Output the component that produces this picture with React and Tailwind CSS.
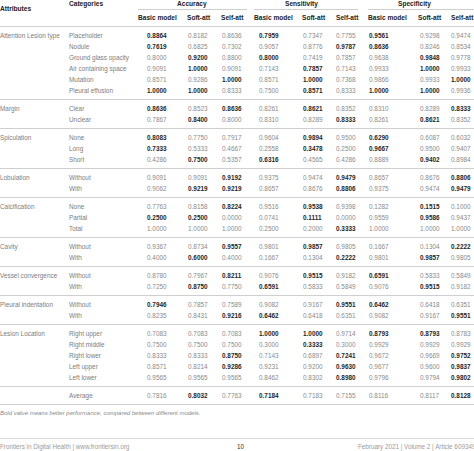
import React from 'react';

// "*" at the end of a value = bold (better performance)
const groups = [
  {
    name: 'Attention Lesion type',
    rows: [
      ['Placeholder', '0.8864*', '0.8182', '0.8636', '0.7959*', '0.7347', '0.7755', '0.9561*', '0.9298', '0.9474'],
      ['Nodule', '0.7619*', '0.6825', '0.7302', '0.9057', '0.8776', '0.9787*', '0.8636*', '0.8246', '0.8534'],
      ['Ground glass opacity', '0.8000', '0.9200*', '0.8800', '0.8000*', '0.7419', '0.7857', '0.9638', '0.9848*', '0.9778'],
      ['Air containing space', '0.9091', '1.0000*', '0.9091', '0.7143', '0.7857*', '0.7143', '0.9933', '1.0000*', '0.9933'],
      ['Mutation', '0.8571', '0.9286', '1.0000*', '0.8571', '1.0000*', '0.7368', '0.9866', '0.9933', '1.0000*'],
      ['Pleural effusion', '1.0000*', '1.0000*', '0.8333', '0.7500', '0.8571*', '0.8333', '1.0000*', '1.0000*', '0.9936'],
    ],
  },
  {
    name: 'Margin',
    rows: [
      ['Clear', '0.8636*', '0.8523', '0.8636*', '0.8261', '0.8621*', '0.8352', '0.8310', '0.8289', '0.8333*'],
      ['Unclear', '0.7867', '0.8400*', '0.8000', '0.8310', '0.8289', '0.8333*', '0.8261', '0.8621*', '0.8352'],
    ],
  },
  {
    name: 'Spiculation',
    rows: [
      ['None', '0.8083*', '0.7750', '0.7917', '0.9604', '0.9894*', '0.9500', '0.6290*', '0.6087', '0.6032'],
      ['Long', '0.7333*', '0.5333', '0.4667', '0.2558', '0.3478*', '0.2500', '0.9667*', '0.9500', '0.9407'],
      ['Short', '0.4286', '0.7500*', '0.5357', '0.6316*', '0.4565', '0.4286', '0.8889', '0.9402*', '0.8984'],
    ],
  },
  {
    name: 'Lobulation',
    rows: [
      ['Without', '0.9091', '0.9091', '0.9192*', '0.9375', '0.9474', '0.9479*', '0.8657', '0.8676', '0.8806*'],
      ['With', '0.9062', '0.9219*', '0.9219*', '0.8657', '0.8676', '0.8806*', '0.9375', '0.9474', '0.9479*'],
    ],
  },
  {
    name: 'Calcification',
    rows: [
      ['None', '0.7763', '0.8158', '0.8224*', '0.9516', '0.9538*', '0.9398', '0.1282', '0.1515*', '0.1000'],
      ['Partial', '0.2500*', '0.2500*', '0.0000', '0.0741', '0.1111*', '0.0000', '0.9559', '0.9586*', '0.9437'],
      ['Total', '1.0000', '1.0000', '1.0000', '0.2500', '0.2000', '0.3333*', '1.0000', '1.0000', '1.0000'],
    ],
  },
  {
    name: 'Cavity',
    rows: [
      ['Without', '0.9367', '0.8734', '0.9557*', '0.9801', '0.9857*', '0.9805', '0.1667', '0.1304', '0.2222*'],
      ['With', '0.4000', '0.6000*', '0.4000', '0.1667', '0.1304', '0.2222*', '0.9801', '0.9857*', '0.9805'],
    ],
  },
  {
    name: 'Vessel convergence',
    rows: [
      ['Without', '0.8780', '0.7967', '0.8211*', '0.9076', '0.9515*', '0.9182', '0.6591*', '0.5833', '0.5849'],
      ['With', '0.7250', '0.8750*', '0.7750', '0.6591*', '0.5833', '0.5849', '0.9076', '0.9515*', '0.9182'],
    ],
  },
  {
    name: 'Pleural indentation',
    rows: [
      ['Without', '0.7946*', '0.7857', '0.7589', '0.9082', '0.9167', '0.9551*', '0.6462*', '0.6418', '0.6351'],
      ['With', '0.8235', '0.8431', '0.9216*', '0.6462*', '0.6418', '0.6351', '0.9082', '0.9167', '0.9551*'],
    ],
  },
  {
    name: 'Lesion Location',
    rows: [
      ['Right upper', '0.7083', '0.7083', '0.7083', '1.0000*', '1.0000*', '0.9714', '0.8793*', '0.8793*', '0.8783'],
      ['Right middle', '0.7500', '0.7500', '0.7500', '0.3000', '0.3333*', '0.3000', '0.9929', '0.9929', '0.9929'],
      ['Right lower', '0.8333', '0.8333', '0.8750*', '0.7143', '0.6897', '0.7241*', '0.9672', '0.9669', '0.9752*'],
      ['Left upper', '0.8571', '0.8214', '0.9286*', '0.9231', '0.9200', '0.9630*', '0.9677', '0.9600', '0.9837*'],
      ['Left lower', '0.9565', '0.9565', '0.9565', '0.8462', '0.8302', '0.8980*', '0.9796', '0.9794', '0.9802*'],
    ],
  },
  {
    name: '',
    rows: [
      ['Average', '0.7816', '0.8032*', '0.7763', '0.7184*', '0.7183', '0.7155', '0.8116', '0.8117', '0.8128*'],
    ],
  },
];

const cols = 'grid grid-cols-[69px_69px_49px_34px_33px_48px_34px_32px_50px_33px_60px]';
const valPad = ['pl-[9px]', 'pl-[1px]', 'pl-[1px]', 'pl-[5px]', 'pl-[1px]', 'pl-0', 'pl-[1px]', 'pl-[2px]', 'pl-0'];
const subHeads = ['Basic model', 'Soft-att', 'Self-att', 'Basic model', 'Soft-att', 'Self-att', 'Basic model', 'Soft-att', 'Self-att'];

const Value = ({ v, i }) => {
  const bold = v.endsWith('*');
  return (
    <div className={`h-[11px] leading-[11px] whitespace-nowrap ${valPad[i]} ${bold ? 'font-bold text-[#1f1f1f]' : 'text-[#8a8a8a]'}`}>
      {bold ? v.slice(0, -1) : v}
    </div>
  );
};

export default function App() {
  return (
    <div className="w-[474px] h-[451px] overflow-hidden bg-white font-['Liberation_Sans',Arial,sans-serif]">
      <div className="w-[511px]">
        {/* header */}
        <div className={`${cols} grid-rows-[10px_16px] border-b border-[#cfcfcf] text-[6.6px] font-bold text-[#222]`}>
          <div className="row-span-2 pt-[5px] leading-[7px] whitespace-nowrap">Attributes</div>
          <div className="row-span-2 leading-[7px]">Categories</div>
          <div className="col-span-3 mr-[7px] border-b border-[#cfcfcf] pl-[39px] leading-[7px]">Accuracy</div>
          <div className="col-span-3 mr-[10px] border-b border-[#cfcfcf] pl-[31px] leading-[7px]">Sensitivity</div>
          <div className="col-span-3 border-b border-[#cfcfcf] pl-[30px] leading-[7px]">Specificity</div>
          {subHeads.map((h, i) => (
            <div key={i} className="flex items-center whitespace-nowrap">{h}</div>
          ))}
        </div>

        {/* body */}
        {groups.map((g) => (
          <div key={g.rows[0][0] + g.name} className={`${cols} py-[3px] border-b border-[#cfcfcf] text-[6.4px]`}>
            {g.rows.map((r, ri) => (
              <React.Fragment key={r[0]}>
                <div className="h-[11px] leading-[11px] whitespace-nowrap text-[#7d7d7d]">{ri === 0 ? g.name : ''}</div>
                <div className="h-[11px] leading-[11px] whitespace-nowrap text-[#7d7d7d]">{r[0]}</div>
                {r.slice(1).map((v, i) => (
                  <Value key={i} v={v} i={i} />
                ))}
              </React.Fragment>
            ))}
          </div>
        ))}

        <p className="mt-[5px] leading-[7px] text-[6px] italic text-[#8a8a8a] whitespace-nowrap">
          Bold value means better performance, compared between different models.
        </p>
      </div>

      {/* page footer */}
      <div className="mt-[21px] border-t border-[#d6d6d6] pt-[4px] flex text-[6.3px] leading-[8px] whitespace-nowrap">
        <div className="w-[237px] shrink-0 text-[#9a9a9a]">Frontiers in Digital Health | www.frontiersin.org</div>
        <div className="w-[121px] shrink-0 text-[#333]">10</div>
        <div className="shrink-0 text-[#9a9a9a]">February 2021 | Volume 2 | Article 609349</div>
      </div>
    </div>
  );
}
